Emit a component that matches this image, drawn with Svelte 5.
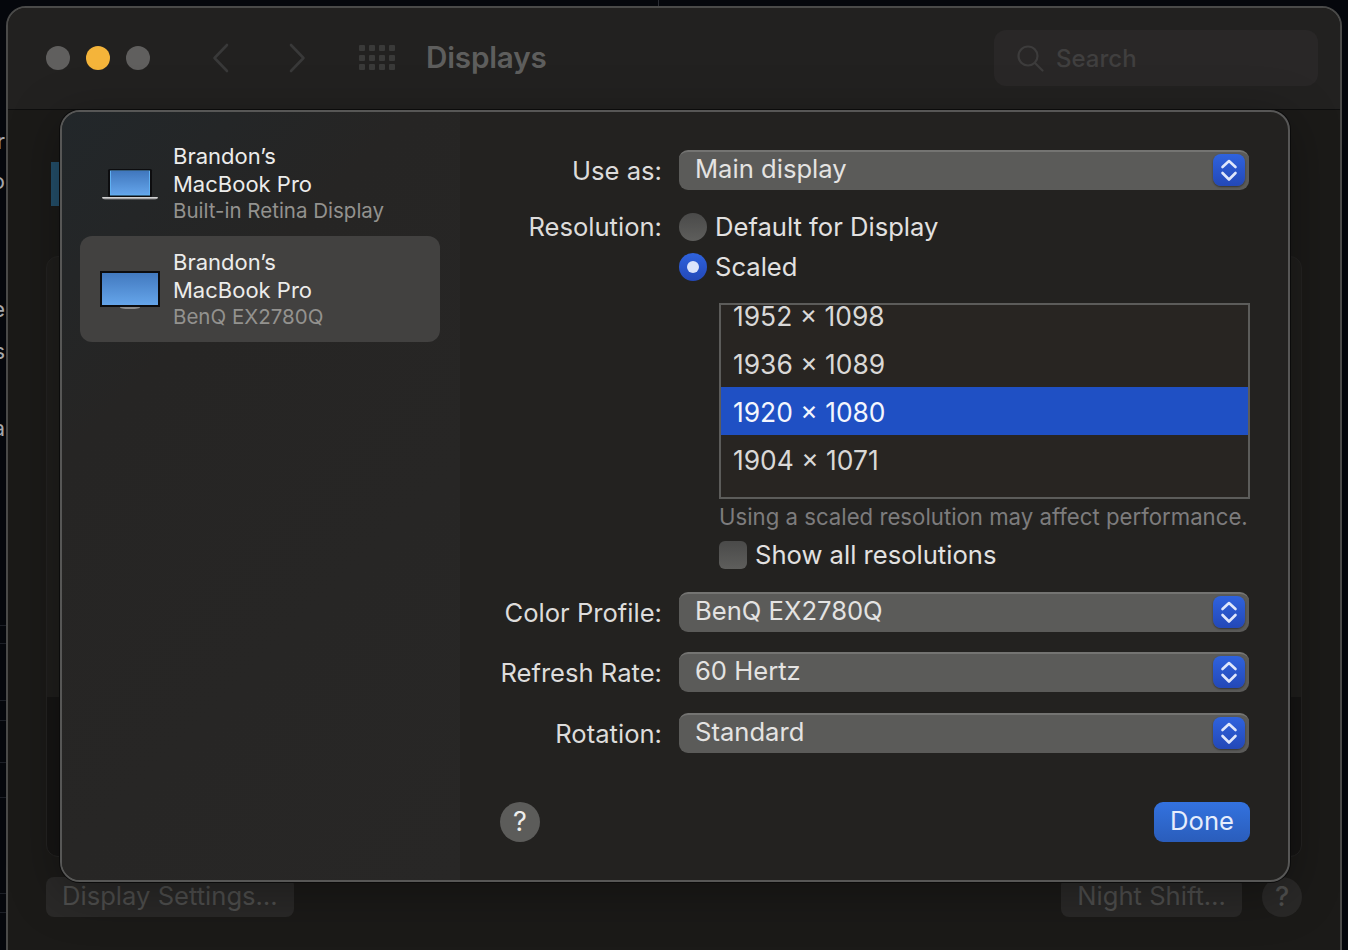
<script>
  const fields = [
    { label: 'Color Profile:', value: 'BenQ EX2780Q', cls: 'f-color' },
    { label: 'Refresh Rate:', value: '60 Hertz', cls: 'f-refresh' },
    { label: 'Rotation:', value: 'Standard', cls: 'f-rotation' }
  ];
  const sizes = ['1952 × 1098', '1936 × 1089', '1920 × 1080', '1904 × 1071'];
  const dots = Array.from({ length: 12 });
  const peeks = [
    { t: 'r', y: 128 },
    { t: 'o', y: 168 },
    { t: 'e', y: 296 },
    { t: 's', y: 338 },
    { t: 'a', y: 415 }
  ];
  const rules = [625, 643, 700, 720, 762, 797, 893, 912];
</script>

{#snippet stepper()}
  <span class="stepper">
    <svg width="20" height="28" viewBox="0 0 20 28" fill="none" stroke="#dfe7fb" stroke-width="2.6" stroke-linecap="round" stroke-linejoin="round">
      <path d="M3.500 11 10 5l6.500 6" />
      <path d="M3.500 17 10 23.500l6.500-6.500" />
    </svg>
  </span>
{/snippet}

{#snippet select(label, value, cls)}
  <div class="row {cls}">
    <div class="label low">{label}</div>
    <div class="select"><span class="value">{value}</span>{@render stepper()}</div>
  </div>
{/snippet}

<div class="page">
  <div class="backdrop">
    <span class="seam"></span>
    {#each peeks as p}
      <span class="peek" style="top: {p.y}px"><span>{p.t}</span></span>
    {/each}
    {#each rules as y}
      <span class="rule" style="top: {y}px"></span>
    {/each}
  </div>

  <div class="window">
    <header class="titlebar">
      <div class="lights">
        <span class="light"></span>
        <span class="light amber"></span>
        <span class="light"></span>
      </div>
      <svg class="chev" width="20" height="30" viewBox="0 0 20 30" fill="none" stroke="#393939" stroke-width="2.6" stroke-linecap="round" stroke-linejoin="round"><path d="M17 2 4.500 15 17 28" /></svg>
      <svg class="chev next" width="20" height="30" viewBox="0 0 20 30" fill="none" stroke="#393939" stroke-width="2.6" stroke-linecap="round" stroke-linejoin="round"><path d="M5 2l12.500 13L5 28" /></svg>
      <div class="grid-icon">{#each dots as _}<i></i>{/each}</div>
      <div class="title">Displays</div>
      <div class="search">
        <svg width="28" height="28" viewBox="0 0 28 28" fill="none" stroke="#3d3c3c" stroke-width="2.200" stroke-linecap="round"><circle cx="12" cy="12" r="9.500" /><path d="M19 19l7.500 7.500" /></svg>
        <span>Search</span>
      </div>
    </header>

    <main class="content">
      <div class="tile"></div>
      <div class="pane"></div>
      <div class="buttons">
        <div class="ghost">Display Settings…</div>
        <div class="right-ghost">
          <div class="ghost">Night Shift…</div>
          <div class="ghost-help">?</div>
        </div>
      </div>
    </main>

    <section class="sheet">
      <aside class="sidebar">
        <div class="display">
          <div class="icon">
            <svg width="60" height="36" viewBox="0 0 60 36">
              <defs>
                <linearGradient id="scr" x1="0" y1="0" x2="0" y2="1"><stop offset="0" stop-color="#4077bd" /><stop offset="1" stop-color="#64a4ea" /></linearGradient>
                <linearGradient id="base" x1="0" y1="0" x2="0" y2="1"><stop offset="0" stop-color="#e8e8e8" /><stop offset="1" stop-color="#77777a" /></linearGradient>
              </defs>
              <rect x="8" y="4" width="44" height="28" rx="1.500" fill="#0d0d0f" />
              <rect x="10" y="5.500" width="40" height="25" fill="#5fb0f2" />
              <rect x="11" y="6" width="38" height="23.500" fill="url(#scr)" />
              <path d="M3 32h54c1 0 1.500 1 .500 1.500-1 .800-2 1-3.500 1H6c-1.500 0-2.500-.200-3.500-1C1.500 33 2 32 3 32z" fill="url(#base)" />
            </svg>
          </div>
          <div class="names">
            <div>Brandon’s</div>
            <div>MacBook Pro</div>
            <div class="sub">Built-in Retina Display</div>
          </div>
        </div>
        <div class="display active">
          <div class="icon">
            <svg width="60" height="40" viewBox="0 0 60 40">
              <defs>
                <linearGradient id="scr2" x1="0" y1="0" x2="0" y2="1"><stop offset="0" stop-color="#4279bf" /><stop offset="1" stop-color="#65a5ea" /></linearGradient>
              </defs>
              <rect x="0" y="2" width="60" height="36" fill="#0c0c0e" />
              <rect x="2" y="4" width="56" height="32" fill="url(#scr2)" />
              <path d="M20 38h20c0 1.500-3 2-10 2s-10-.500-10-2z" fill="#8a8a8a" />
            </svg>
          </div>
          <div class="names">
            <div>Brandon’s</div>
            <div>MacBook Pro</div>
            <div class="sub">BenQ EX2780Q</div>
          </div>
        </div>
      </aside>

      <div class="panel">
        {@render select('Use as:', 'Main display', 'f-use')}

        <div class="row f-res">
          <div class="label">Resolution:</div>
          <div class="choice"><span class="radio"></span><span class="txt">Default for Display</span></div>
        </div>
        <div class="row f-scaled">
          <div class="label"></div>
          <div class="choice"><span class="radio on"><i></i></span><span class="txt">Scaled</span></div>
        </div>

        <div class="list">
          <div class="list-inner">
            {#each sizes as s, i}
              <div class="size" class:selected={i === 2}>{s}</div>
            {/each}
          </div>
        </div>
        <div class="note">Using a scaled resolution may affect performance.</div>
        <div class="check"><span class="box"></span><span class="txt">Show all resolutions</span></div>

        {#each fields as f}
          {@render select(f.label, f.value, f.cls)}
        {/each}

        <div class="actions">
          <div class="help">?</div>
          <div class="done">Done</div>
        </div>
      </div>
    </section>
  </div>
</div>

<style>
  :global(body) {
    margin: 0;
    background: #0b0d12;
  }
  .page {
    position: relative;
    width: 1348px;
    height: 950px;
    overflow: hidden;
    padding: 6px 6px 0;
    box-sizing: border-box;
    font-family: Inter, "Liberation Sans", sans-serif;
    color: #e2e1e0;
    background: #05070c;
  }
  .backdrop {
    position: absolute;
    inset: 0;
  }
  .seam {
    position: absolute;
    left: 658px;
    top: 0;
    width: 1px;
    height: 6px;
    background: #2a2c33;
  }
  .peek {
    position: absolute;
    left: 0;
    width: 5px;
    height: 26px;
    overflow: hidden;
    display: flex;
    justify-content: flex-end;
    font-size: 22px;
    line-height: 26px;
    color: #a6a7ab;
  }
  .peek span {
    flex: none;
  }
  .rule {
    position: absolute;
    left: 0;
    width: 6px;
    height: 1px;
    background: #1c1f26;
  }
  .window {
    position: relative;
    height: 960px;
    box-sizing: border-box;
    border: 2px solid #4a4a49;
    border-radius: 20px 20px 0 0;
    background: #1b1a18;
    display: flex;
    flex-direction: column;
  }
  .titlebar {
    height: 102px;
    flex: none;
    box-sizing: border-box;
    border-bottom: 1px solid #0e0e0e;
    border-radius: 18px 18px 0 0;
    background: #222120;
    display: flex;
    align-items: center;
    padding: 0 22px 2px 38px;
  }
  .lights {
    display: flex;
    gap: 16px;
  }
  .light {
    width: 24px;
    height: 24px;
    border-radius: 50%;
    background: #605f5e;
  }
  .light.amber {
    background: #f4b43a;
  }
  .chev {
    margin-left: 60px;
  }
  .chev.next {
    margin-left: 56px;
  }
  .grid-icon {
    margin-left: 53px;
    display: grid;
    grid-template-columns: repeat(4, 6px);
    gap: 3.500px 4px;
  }
  .grid-icon i {
    width: 6px;
    height: 6px;
    background: #3a3a39;
    border-radius: 1px;
  }
  .title {
    margin-left: 31px;
    padding-bottom: 2px;
    font-size: 29.700px;
    font-weight: 600;
    color: #5e5e5d;
    letter-spacing: -0.2px;
  }
  .search {
    margin-left: auto;
    width: 324px;
    height: 56px;
    box-sizing: border-box;
    border-radius: 12px;
    background: #292727;
    display: flex;
    align-items: center;
    gap: 12px;
    padding-left: 22px;
    color: #403f3f;
    font-size: 24px;
    font-weight: 500;
  }
  .search span {
    margin-top: 2px;
  }
  .content {
    flex: 1;
    position: relative;
    padding: 52px 38px 0;
    display: flex;
    flex-direction: column;
  }
  .tile {
    width: 60px;
    height: 44px;
    margin-left: 5px;
    background: #24506c;
  }
  .pane {
    height: 601px;
    box-sizing: border-box;
    margin-top: 50px;
    border: 1px solid #242322;
    border-radius: 12px;
    background: linear-gradient(#1f1e1c 440px, #161514 440px);
  }
  .buttons {
    margin-top: 20px;
    display: flex;
    justify-content: space-between;
  }
  .right-ghost {
    display: flex;
    gap: 20px;
  }
  .ghost {
    height: 40px;
    box-sizing: border-box;
    padding: 0 16px;
    border-radius: 8px;
    background: #2a2928;
    color: #4f4f4e;
    font-size: 25.600px;
    line-height: 38px;
  }
  .ghost-help {
    width: 40px;
    height: 40px;
    border-radius: 50%;
    background: #2a2928;
    color: #4f4f4e;
    font-size: 27px;
    line-height: 40px;
    text-align: center;
    font-weight: 500;
  }
  .sheet {
    position: absolute;
    left: 52px;
    top: 102px;
    width: 1230px;
    height: 772px;
    box-sizing: border-box;
    border: 2px solid #575756;
    border-radius: 20px;
    overflow: hidden;
    display: flex;
    background: #232220;
    box-shadow: 0 0 0 1px #0b0b0b, 0 10px 50px rgba(0, 0, 0, 0.35);
  }
  .sidebar {
    width: 398px;
    flex: none;
    box-sizing: border-box;
    padding: 18px 20px 0 18px;
    background: linear-gradient(135deg, #22272a 0%, #262524 30%, #282726 100%);
    display: flex;
    flex-direction: column;
  }
  .display {
    height: 106px;
    border-radius: 12px;
    display: flex;
    align-items: center;
    box-sizing: border-box;
    padding-left: 20px;
  }
  .display.active {
    background: #424140;
  }
  .icon {
    width: 60px;
    flex: none;
    display: flex;
  }
  .names {
    margin-left: 13px;
    font-size: 22px;
    line-height: 28px;
    color: #ececeb;
  }
  .names .sub {
    font-size: 20.500px;
    line-height: 26px;
    color: #93928f;
  }
  .panel {
    flex: 1;
    box-sizing: border-box;
    padding: 38px 39px 0 40px;
    display: flex;
    flex-direction: column;
  }
  .row {
    display: flex;
    align-items: center;
    height: 40px;
    font-size: 25.600px;
  }
  .label {
    width: 162px;
    flex: none;
    text-align: right;
    margin-top: -2px;
    margin-right: 17px;
    color: #dddcdb;
    white-space: nowrap;
  }
  .label.low {
    margin-top: 0;
  }
  .select {
    flex: 1;
    height: 40px;
    box-sizing: border-box;
    border-radius: 9px;
    border-top: 2px solid #747472;
    background: #5b5b59;
    display: flex;
    align-items: center;
    justify-content: space-between;
    padding: 0 4px 2px 16px;
    color: #e4e3e2;
  }
  .value {
    margin-top: -4px;
  }
  .txt {
    margin-top: -2px;
  }
  .stepper {
    width: 32px;
    height: 32px;
    border-radius: 8px;
    background: linear-gradient(#2f63de, #2348b7);
    box-shadow: 0 1px 2px rgba(0, 0, 0, 0.45);
    display: flex;
    align-items: center;
    justify-content: center;
  }
  .f-res {
    margin-top: 17px;
  }
  .choice {
    display: flex;
    align-items: center;
    gap: 8px;
    color: #e2e1e0;
  }
  .radio {
    width: 28px;
    height: 28px;
    border-radius: 50%;
    background: linear-gradient(#4a4a49, #5e5e5c);
    display: flex;
    align-items: center;
    justify-content: center;
  }
  .radio.on {
    background: linear-gradient(#2f63de, #2348b7);
  }
  .radio.on i {
    width: 12px;
    height: 12px;
    border-radius: 50%;
    background: #dbe4fb;
  }
  .list {
    margin: 16px -1px 0 219px;
    height: 196px;
    box-sizing: border-box;
    border: 2px solid #5c5c5a;
    background: #282522;
    overflow: hidden;
  }
  .list-inner {
    margin-top: -14px;
  }
  .size {
    height: 48px;
    line-height: 50px;
    padding-left: 12px;
    font-size: 26.400px;
    color: #d9d8d7;
  }
  .size.selected {
    background: #1f50c4;
    color: #f4f6fd;
  }
  .note {
    margin: 5px 0 0 219px;
    font-size: 22.200px;
    line-height: 26px;
    color: #7d7c7d;
    white-space: nowrap;
  }
  .check {
    margin: 10px 0 1px 219px;
    display: flex;
    align-items: center;
    gap: 8px;
    font-size: 25.600px;
    height: 30px;
    color: #e2e1e0;
  }
  .box {
    width: 28px;
    height: 28px;
    border-radius: 6px;
    background: linear-gradient(#4a4a49, #5e5e5c);
  }
  .f-color {
    margin-top: 21px;
  }
  .f-refresh {
    margin-top: 20px;
  }
  .f-rotation {
    margin-top: 21px;
  }
  .actions {
    margin-top: 49px;
    margin-right: -1px;
    display: flex;
    justify-content: space-between;
  }
  .help {
    width: 40px;
    height: 40px;
    border-radius: 50%;
    background: #5c5c5a;
    color: #eeeeed;
    font-size: 27px;
    font-weight: 400;
    text-align: center;
    line-height: 40px;
  }
  .done {
    width: 96px;
    height: 40px;
    border-radius: 9px;
    background: linear-gradient(#3372df, #2a5dbb);
    color: #e6edfc;
    font-size: 25.600px;
    text-align: center;
    line-height: 38px;
  }
</style>
